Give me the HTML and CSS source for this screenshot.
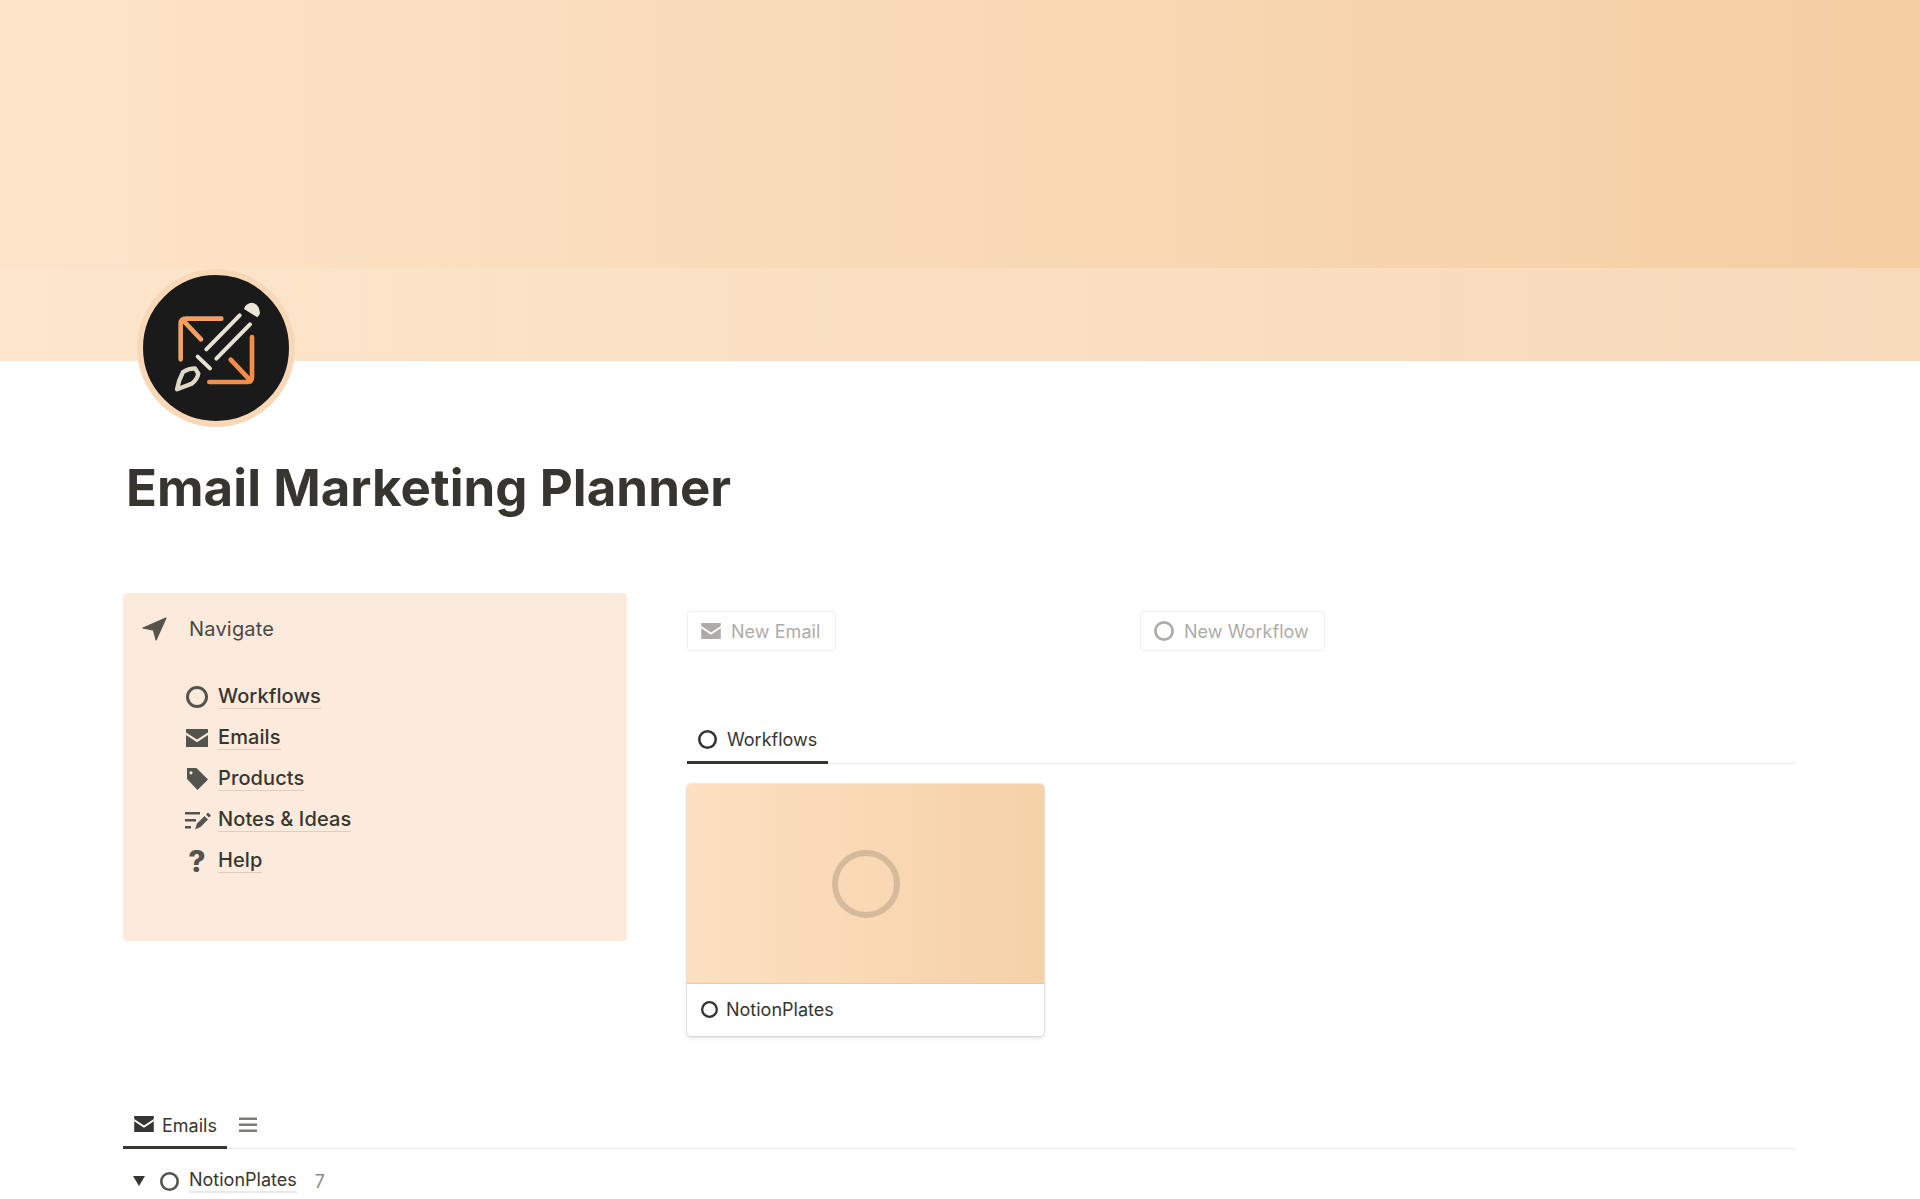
FILE: index.html
```html
<!DOCTYPE html>
<html lang="en">
<head>
<meta charset="utf-8">
<title>Email Marketing Planner</title>
<link rel="stylesheet" href="styles.css">
</head>
<body>
<svg class="defs" width="0" height="0" aria-hidden="true">
  <symbol id="mail" viewBox="0 0 22 18"><path d="M0 0H22V3.4L11 10.6 0 3.4Z"/><path d="M0 6 11 13.2 22 6V18H0Z"/></symbol>
  <symbol id="ring" viewBox="0 0 22 22"><circle cx="11" cy="11" r="9.5" fill="none" stroke="currentColor" stroke-width="3"/></symbol>
</svg>
<header class="banner"><div class="band"></div></header>
<main class="page">
  <div class="logo">
    <svg viewBox="111 87 474 474" width="158" height="158">
      <circle cx="348" cy="324" r="228" fill="#1a1a1a" stroke="#f8d8b6" stroke-width="18"/>
      <g fill="none" stroke="#f4a063" stroke-width="14" stroke-linecap="round" stroke-linejoin="round">
        <path d="M242 358V252Q242 236 258 236H364"/>
        <path d="M252 244 303 298"/>
        <path d="M456 291V410Q456 426 440 426H328" stroke="#f38f48"/>
        <path d="M392 359 446 416" stroke="#f38f48"/>
      </g>
      <g fill="none" stroke="#e8e2d4" stroke-linecap="round">
        <path d="M319 328 419 226M349 356 450 253" stroke-width="12"/>
        <path d="M293 350 330 385" stroke-width="12"/>
      </g>
      <path d="M432 207Q436 190 455 188 476 190 480 218 479 226 472 232Z" fill="#ece6d8"/>
      <path d="M231 448Q236 420 249 396 266 385 285 385L295 401Q291 420 275 431Z" fill="none" stroke="#e0d9c8" stroke-width="13" stroke-linejoin="round"/>
    </svg>
  </div>
  <h1 class="title">Email Marketing Planner</h1>
  <section class="columns">
    <aside class="nav-card">
      <div class="nav-head">
        <svg class="nav-arrow" viewBox="0 0 24 23"><path d="M1 10.5 23 1 13.5 22 11 12.5Z" stroke="currentColor" stroke-width="1.2" stroke-linejoin="round"/></svg>
        <span>Navigate</span>
      </div>
      <ul class="nav-list">
        <li><span class="ico"><svg width="22" height="22"><use href="#ring"/></svg></span><a class="lnk">Workflows</a></li>
        <li><span class="ico"><svg width="22" height="18"><use href="#mail"/></svg></span><a class="lnk">Emails</a></li>
        <li><span class="ico"><svg width="22" height="22" viewBox="0 0 22 22"><path fill-rule="evenodd" d="M1 0H10.5L22 11.5 11.5 22 1 11ZM5 3.2A1.6 1.6 0 1 0 5 6.4 1.6 1.6 0 1 0 5 3.2Z"/></svg></span><a class="lnk">Products</a></li>
        <li><span class="ico ico-wide"><svg width="26" height="20" viewBox="0 0 26 20"><path d="M0 2H15V4.4H0ZM0 9H11V11.4H0ZM0 16H6V18.4H0Z"/><path d="M10 19.5 12 13.5 19.5 6 23 9.5 15.5 17ZM21 4.5 23 2.5 26 5.5 24 7.5Z"/></svg></span><a class="lnk">Notes &amp; Ideas</a></li>
        <li><span class="ico ico-q">?</span><a class="lnk">Help</a></li>
      </ul>
    </aside>
    <div class="main-col">
      <div class="buttons">
        <div class="btn-slot"><button class="btn"><svg width="20" height="16"><use href="#mail"/></svg>New Email</button></div>
        <div class="btn-slot"><button class="btn"><svg width="20" height="20"><use href="#ring"/></svg>New Workflow</button></div>
      </div>
      <div class="tabs">
        <div class="tab tab-workflows"><svg width="19" height="19"><use href="#ring"/></svg>Workflows</div>
      </div>
      <article class="card">
        <div class="card-img"><svg width="70" height="70" viewBox="0 0 70 70"><circle cx="35" cy="35" r="31" fill="none" stroke="#d5ba9b" stroke-width="6"/></svg></div>
        <div class="card-foot"><svg width="17" height="17"><use href="#ring"/></svg>NotionPlates</div>
      </article>
    </div>
  </section>
  <section class="emails">
    <div class="tabs tabs-emails">
      <div class="tab tab-emails"><svg width="20" height="16"><use href="#mail"/></svg>Emails</div>
      <svg class="menu" width="20" height="16" viewBox="0 0 20 16"><path d="M1 .5H19V3H1ZM1 6.5H19V9H1ZM1 12.5H19V15H1Z"/></svg>
    </div>
    <div class="group">
      <svg class="caret" width="12" height="10" viewBox="0 0 12 10"><path d="M0 0H12L6 10Z"/></svg>
      <svg class="g-ring" width="19" height="19"><use href="#ring"/></svg>
      <a class="g-name">NotionPlates</a>
      <span class="count">7</span>
    </div>
  </section>
</main>
</body>
</html>
```
FILE: styles.css
```css
* { box-sizing: border-box; }
html, body { margin: 0; padding: 0; height: 1199px; overflow: hidden; background: #fff; }
body { font-family: Inter, "Liberation Sans", sans-serif; color: #37352f; font-size: 20px; }
.defs { position: absolute; }
svg { display: block; fill: currentColor; flex: none; }

.banner { height: 361px; background: linear-gradient(90deg, #fde4c9 0%, #f5cea3 100%); display: flex; flex-direction: column; justify-content: flex-end; }
.band { height: 93px; background: linear-gradient(90deg, rgba(255, 255, 255, .08), rgba(255, 255, 255, .26)); }

.page { padding: 0 124px 0 123px; }
.logo { width: 158px; height: 158px; margin: -92px 0 0 14px; position: relative; }
.title { margin: 31px 0 0 3px; font-size: 51px; line-height: 60px; font-weight: 700; letter-spacing: .05px; color: #37352f; }

.columns { display: flex; gap: 60px; margin-top: 75px; align-items: flex-start; }
.nav-card { width: 504px; height: 348px; background: #fcebdc; border-radius: 4px; padding: 24px 19px 0; }
.nav-head { display: flex; align-items: center; gap: 22px; height: 24px; font-size: 20px; letter-spacing: .2px; color: #4a4842; }
.nav-arrow { width: 25px; height: 24px; color: #55534e; }
.nav-list { list-style: none; margin: 35px 0 0; padding: 0 0 0 44px; display: flex; flex-direction: column; gap: 0; }
.nav-list li { display: flex; align-items: center; gap: 10px; height: 41px; }
.ico { width: 22px; display: flex; justify-content: center; color: #55534e; flex: none; }
.ico-wide { justify-content: flex-start; margin-left: -1px; width: 23px; }
.ico-wide svg { width: 26px; }
.ico-q { font-size: 30px; font-weight: 800; line-height: 24px; }
.lnk { display: block; line-height: 24px; font-weight: 500; letter-spacing: .1px; border-bottom: 1px solid rgba(55, 53, 47, .16); color: #37352f; }

.main-col { flex: 1; min-width: 0; }
.buttons { display: grid; grid-template-columns: 453px 1fr; margin-top: 18px; }
.btn { display: inline-flex; align-items: center; gap: 10px; height: 40px; padding: 0 15px 0 13px; background: #fff; border: 1px solid rgba(55, 53, 47, .08); border-radius: 4px; font: 400 18px Inter, "Liberation Sans", sans-serif; letter-spacing: .05px; color: #aeaca8; }
.tabs { display: flex; align-items: center; border-bottom: 1px solid #e9e9e7; }
.main-col .tabs { margin-top: 73px; height: 40px; }
.tab { display: flex; align-items: center; gap: 10px; height: 40px; padding-bottom: 7px; font-size: 18px; color: #37352f; border-bottom: 3px solid #37352f; margin-bottom: -1px; }
.tab-workflows { width: 141px; padding-left: 11px; }
.card { width: 357px; height: 252px; margin-top: 20px; border-radius: 4px; background: #fff; overflow: hidden; box-shadow: 0 0 0 1px rgba(15, 15, 15, .08), 0 2px 4px rgba(15, 15, 15, .12); }
.card-img { height: 200px; background: linear-gradient(90deg, #fde0c1 0%, #f6d1a8 100%); display: flex; align-items: center; justify-content: center; border-bottom: 1px solid #ecc9a2; }
.card-foot { display: flex; align-items: center; gap: 8px; height: 50px; padding-left: 14px; font-size: 18px; color: #37352f; }

.emails { margin-top: 71px; }
.tabs-emails { height: 42px; }
.tab-emails { width: 104px; height: 42px; padding-left: 11px; padding-bottom: 2px; gap: 8px; }
.tab-emails svg { margin-top: -4px; }
.menu { margin-left: 11px; color: #7d7c78; margin-top: -6px; }
.group { display: flex; align-items: center; height: 30px; margin-top: 17px; padding-left: 10px; font-size: 18px; }
.caret { color: #37352f; }
.g-ring { margin-left: 15px; color: #55534e; }
.g-name { margin-left: 10px; line-height: 22px; border-bottom: 2px solid #e9e9e7; color: #37352f; }
.count { margin-left: 18px; color: #8d8b87; }
```
